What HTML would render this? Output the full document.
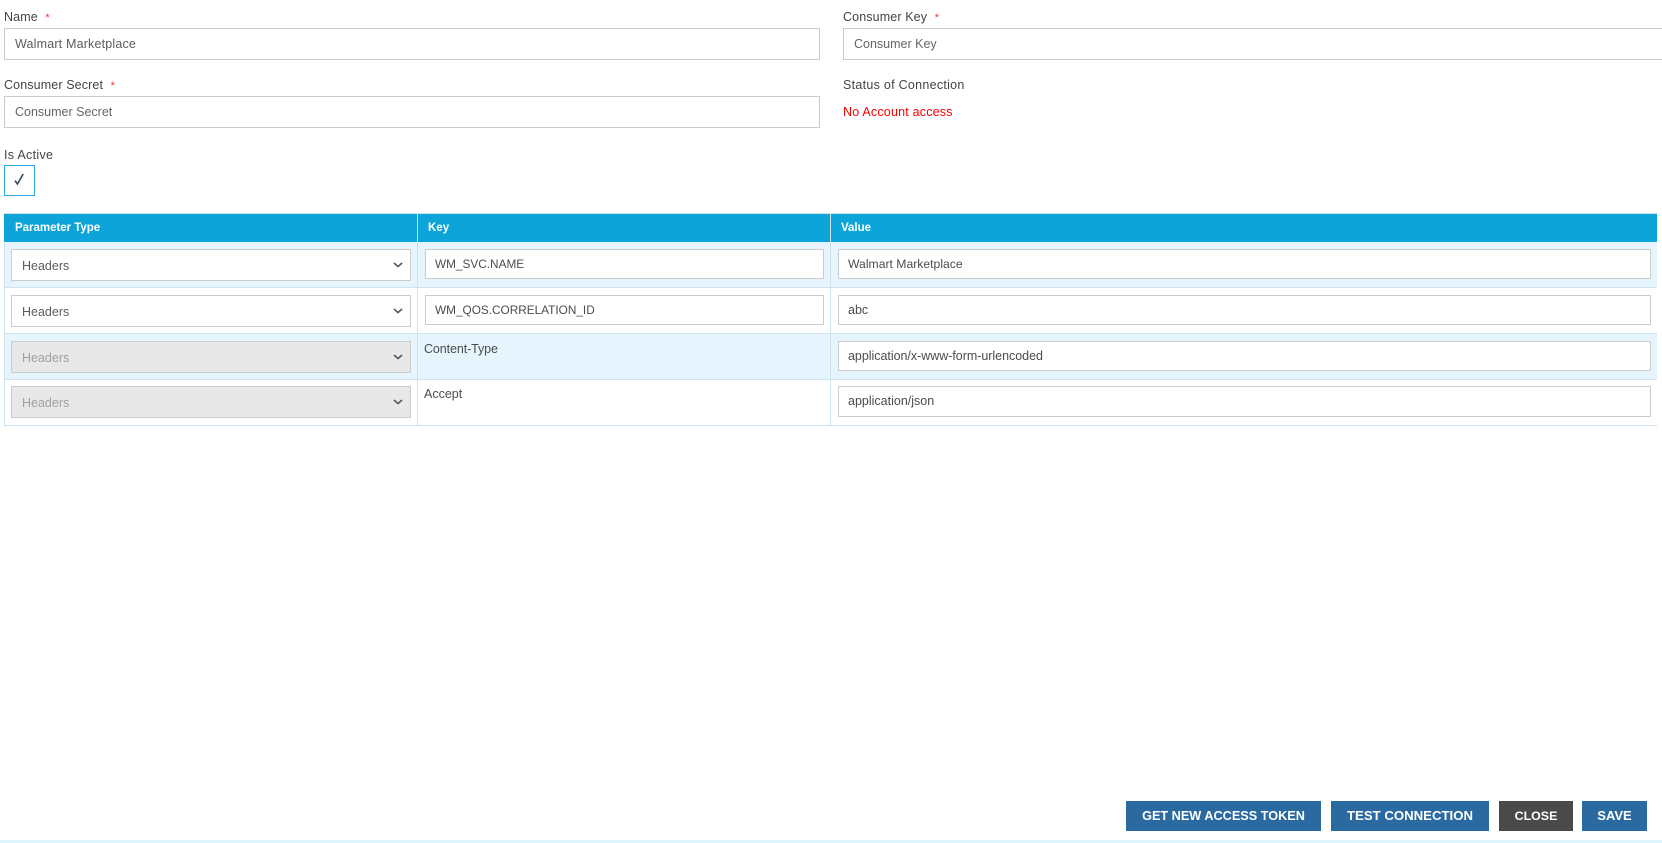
<!DOCTYPE html>
<html lang="en">
<head>
<meta charset="utf-8">
<title>Walmart Marketplace</title>
<style>
html,body{margin:0;padding:0;background:#fff;width:1662px;height:843px;overflow:hidden}
body{position:relative;font-family:"Liberation Sans",sans-serif;font-size:12.5px;color:#444}
.a{position:absolute;box-sizing:border-box;white-space:nowrap}
.l{line-height:16px;height:16px;color:#444;letter-spacing:.12px}
.l i{font-style:normal;color:#e33;font-size:11px;margin-left:4px}
.i{background:#fff;border:1px solid #ccc;line-height:30px;padding-left:10px;color:#5c5c5c}
.t{padding-left:9px;line-height:28px;height:30px;color:#4c4c4c}
.s{background:#fff;border:1px solid #ccc;line-height:32px;padding-left:10px;color:#5c5c5c}
.s.d{background:#e8e8e8;color:#a0a0a0}
.s svg{position:absolute;right:6px;top:9px}
.h{background:#0da5d9;color:#fff;font-weight:bold;font-size:11.5px;line-height:28px;top:214px;height:28px;padding-left:11px}
.r{left:4px;width:1653px;height:1px;background:#cfe3ee}
.v{width:1px;background:#cfe3ee}
.b{top:801px;height:30px;line-height:30px;color:#fff;font-weight:bold;font-size:13.2px;text-align:center;background:#2a6aa1}
</style>
</head>
<body>
<div class="a l" style="left:4px;top:9px">Name <i>*</i></div>
<div class="a i" style="left:4px;top:28px;width:816px;height:32px;letter-spacing:.18px">Walmart Marketplace</div>
<div class="a l" style="left:843px;top:9px">Consumer Key <i>*</i></div>
<div class="a i" style="left:843px;top:28px;width:819px;height:32px;border-right:0;color:#666">Consumer Key</div>
<div class="a l" style="left:4px;top:77px">Consumer Secret <i>*</i></div>
<div class="a i" style="left:4px;top:96px;width:816px;height:32px;color:#666">Consumer Secret</div>
<div class="a l" style="left:843px;top:77px;letter-spacing:.28px">Status of Connection</div>
<div class="a" style="left:843px;top:104px;line-height:16px;color:#f00;letter-spacing:.2px">No Account access</div>
<div class="a l" style="left:4px;top:147px;letter-spacing:.3px">Is Active</div>
<div class="a" style="left:4px;top:165px;width:31px;height:31px;border:1px solid #2aa7e0;background:#fff">
<svg width="29" height="29" viewBox="0 0 29 29" style="display:block"><path d="M10 14.6 L12.4 18 L18.2 8" fill="none" stroke="#3d4a5c" stroke-width="1.6"/></svg>
</div>

<div class="a" style="left:4px;top:242px;width:1653px;height:184px;background:#fff"></div>
<div class="a" style="left:4px;top:242px;width:1653px;height:46px;background:#e6f5fd"></div>
<div class="a" style="left:4px;top:334px;width:1653px;height:46px;background:#e6f5fd"></div>
<div class="a h" style="left:4px;width:413px;letter-spacing:-.02px">Parameter Type</div>
<div class="a h" style="left:418px;width:412px;padding-left:10px">Key</div>
<div class="a h" style="left:831px;width:826px;padding-left:10px">Value</div>
<div class="a" style="left:4px;top:213px;width:1653px;height:1px;background:#cfe3ee"></div>
<div class="a r" style="top:287px"></div>
<div class="a r" style="top:333px"></div>
<div class="a r" style="top:379px"></div>
<div class="a r" style="top:425px"></div>
<div class="a v" style="left:4px;top:242px;height:184px"></div>
<div class="a v" style="left:417px;top:214px;height:212px"></div>
<div class="a v" style="left:830px;top:214px;height:212px"></div>

<div class="a s" style="left:11px;top:249px;width:400px;height:32px">Headers<svg width="12" height="12" viewBox="0 0 12 12"><path d="M2 4 L6 7.6 L10 4" fill="none" stroke="#555" stroke-width="1.6"/></svg></div>
<div class="a s" style="left:11px;top:295px;width:400px;height:32px">Headers<svg width="12" height="12" viewBox="0 0 12 12"><path d="M2 4 L6 7.6 L10 4" fill="none" stroke="#555" stroke-width="1.6"/></svg></div>
<div class="a s d" style="left:11px;top:341px;width:400px;height:32px">Headers<svg width="12" height="12" viewBox="0 0 12 12"><path d="M2 4 L6 7.6 L10 4" fill="none" stroke="#555" stroke-width="1.6"/></svg></div>
<div class="a s d" style="left:11px;top:386px;width:400px;height:32px">Headers<svg width="12" height="12" viewBox="0 0 12 12"><path d="M2 4 L6 7.6 L10 4" fill="none" stroke="#555" stroke-width="1.6"/></svg></div>

<div class="a i t" style="left:425px;top:249px;width:399px;font-size:11.8px">WM_SVC.NAME</div>
<div class="a i t" style="left:425px;top:295px;width:399px;font-size:11.8px">WM_QOS.CORRELATION_ID</div>
<div class="a" style="left:424px;top:341px;line-height:16px;color:#4c4c4c;letter-spacing:-.1px">Content-Type</div>
<div class="a" style="left:424px;top:386px;line-height:16px;color:#4c4c4c">Accept</div>

<div class="a i t" style="left:838px;top:249px;width:813px;font-size:12.2px">Walmart Marketplace</div>
<div class="a i t" style="left:838px;top:295px;width:813px">abc</div>
<div class="a i t" style="left:838px;top:341px;width:813px;letter-spacing:-.03px">application/x-www-form-urlencoded</div>
<div class="a i t" style="left:838px;top:386px;width:813px;height:31px;line-height:29px">application/json</div>

<div class="a b" style="left:1126px;width:195px;font-size:12.7px">GET NEW ACCESS TOKEN</div>
<div class="a b" style="left:1331px;width:158px">TEST CONNECTION</div>
<div class="a b" style="left:1499px;width:74px;font-size:12.4px;background:#4a4a4a">CLOSE</div>
<div class="a b" style="left:1582px;width:65px;font-size:13px">SAVE</div>
<div class="a" style="left:0;top:840px;width:1662px;height:3px;background:#e0f5fb"></div>
</body>
</html>
